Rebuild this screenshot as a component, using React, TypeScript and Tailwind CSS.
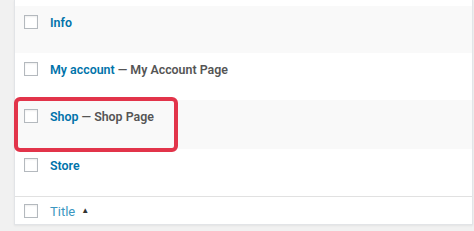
import React from 'react'

const ROWS = [
  { title: 'Info', state: '', alt: true, h: 'h-[47px]' },
  { title: 'My account', state: 'My Account Page', alt: false, h: 'h-[47px]' },
  { title: 'Shop', state: 'Shop Page', alt: true, h: 'h-[49px]' },
  { title: 'Store', state: '', alt: false, h: 'h-[47px]' },
]

function Checkbox() {
  return (
    <span className="block w-[14px] h-[14px] border border-[#b4b9be] bg-white shadow-[inset_0_1px_2px_rgba(0,0,0,0.07)] shrink-0" />
  )
}

export default function App() {
  return (
    <div className="w-[474px] h-[231px] bg-[#f1f1f1] overflow-hidden relative" style={{ fontFamily: 'Roboto, "Liberation Sans", Arial, sans-serif' }}>
      <div className="ml-[14px] mr-[1px] h-[225px] bg-white border-l border-r border-b border-[#e2e4e7] shadow-[0_1px_2px_rgba(0,0,0,0.06)]">
        <div className="h-[6px]" />
        {ROWS.map(r => (
          <div key={r.title} className={`${r.h} flex items-start pl-[9px] pt-[9px] ${r.alt ? 'bg-[#f9f9f9]' : 'bg-white'}`}>
            <Checkbox />
            <div className="ml-[12px] -mt-[1px] text-[12.4px] font-semibold leading-[17px] whitespace-nowrap">
              <span className="text-[#0073aa]">{r.title}</span>
              {r.state && <span className="text-[#555]"> — {r.state}</span>}
            </div>
          </div>
        ))}
        <div className="h-[29px] border-t border-[#e1e1e1] flex items-center pl-[9px]">
          <Checkbox />
          <span className="ml-[12px] text-[13px] text-[#3b97c1] leading-[17px]">Title</span>
          <span className="ml-[6px] text-[8px] text-[#333]">▲</span>
        </div>
      </div>
      <div className="absolute left-[14px] top-[97px] w-[164px] h-[55px] border-[4px] border-[#e2344a] rounded-[6px]" />
    </div>
  )
}
